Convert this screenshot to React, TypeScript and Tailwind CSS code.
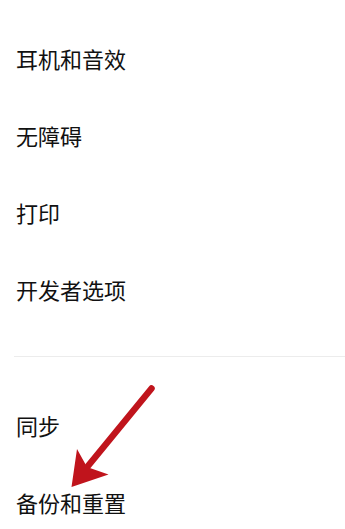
const items = ["耳机和音效", "无障碍", "打印", "开发者选项"]
const items2 = ["同步", "备份和重置"]

function Row({ label }: { label: string }) {
  return (
    <div className="flex h-[77px] items-center pl-4 text-[22px] leading-none text-[#111111]">
      {label}
    </div>
  )
}

export default function App() {
  return (
    <div
      className="relative h-[529px] w-[345px] overflow-hidden bg-white pt-[19px]"
      style={{ fontFamily: '"Noto Sans CJK SC", "Noto Sans", sans-serif' }}
    >
      {items.map((t) => (
        <Row key={t} label={t} />
      ))}
      <div className="ml-[14px] mt-[29px] h-px bg-[#ececec]" />
      <div className="mt-[29px]">
        {items2.map((t) => (
          <Row key={t} label={t} />
        ))}
      </div>

      {/* red pointer arrow */}
      <svg
        className="pointer-events-none absolute left-0 top-0"
        width="345"
        height="529"
        viewBox="0 0 345 529"
      >
        <line
          x1="151.5"
          y1="388.5"
          x2="88"
          y2="466"
          stroke="#c0141c"
          strokeWidth="6.5"
          strokeLinecap="round"
        />
        <path d="M71.5 487 L77 449 L87 467 L108.5 474.5 Z" fill="#c0141c" />
      </svg>
    </div>
  )
}
